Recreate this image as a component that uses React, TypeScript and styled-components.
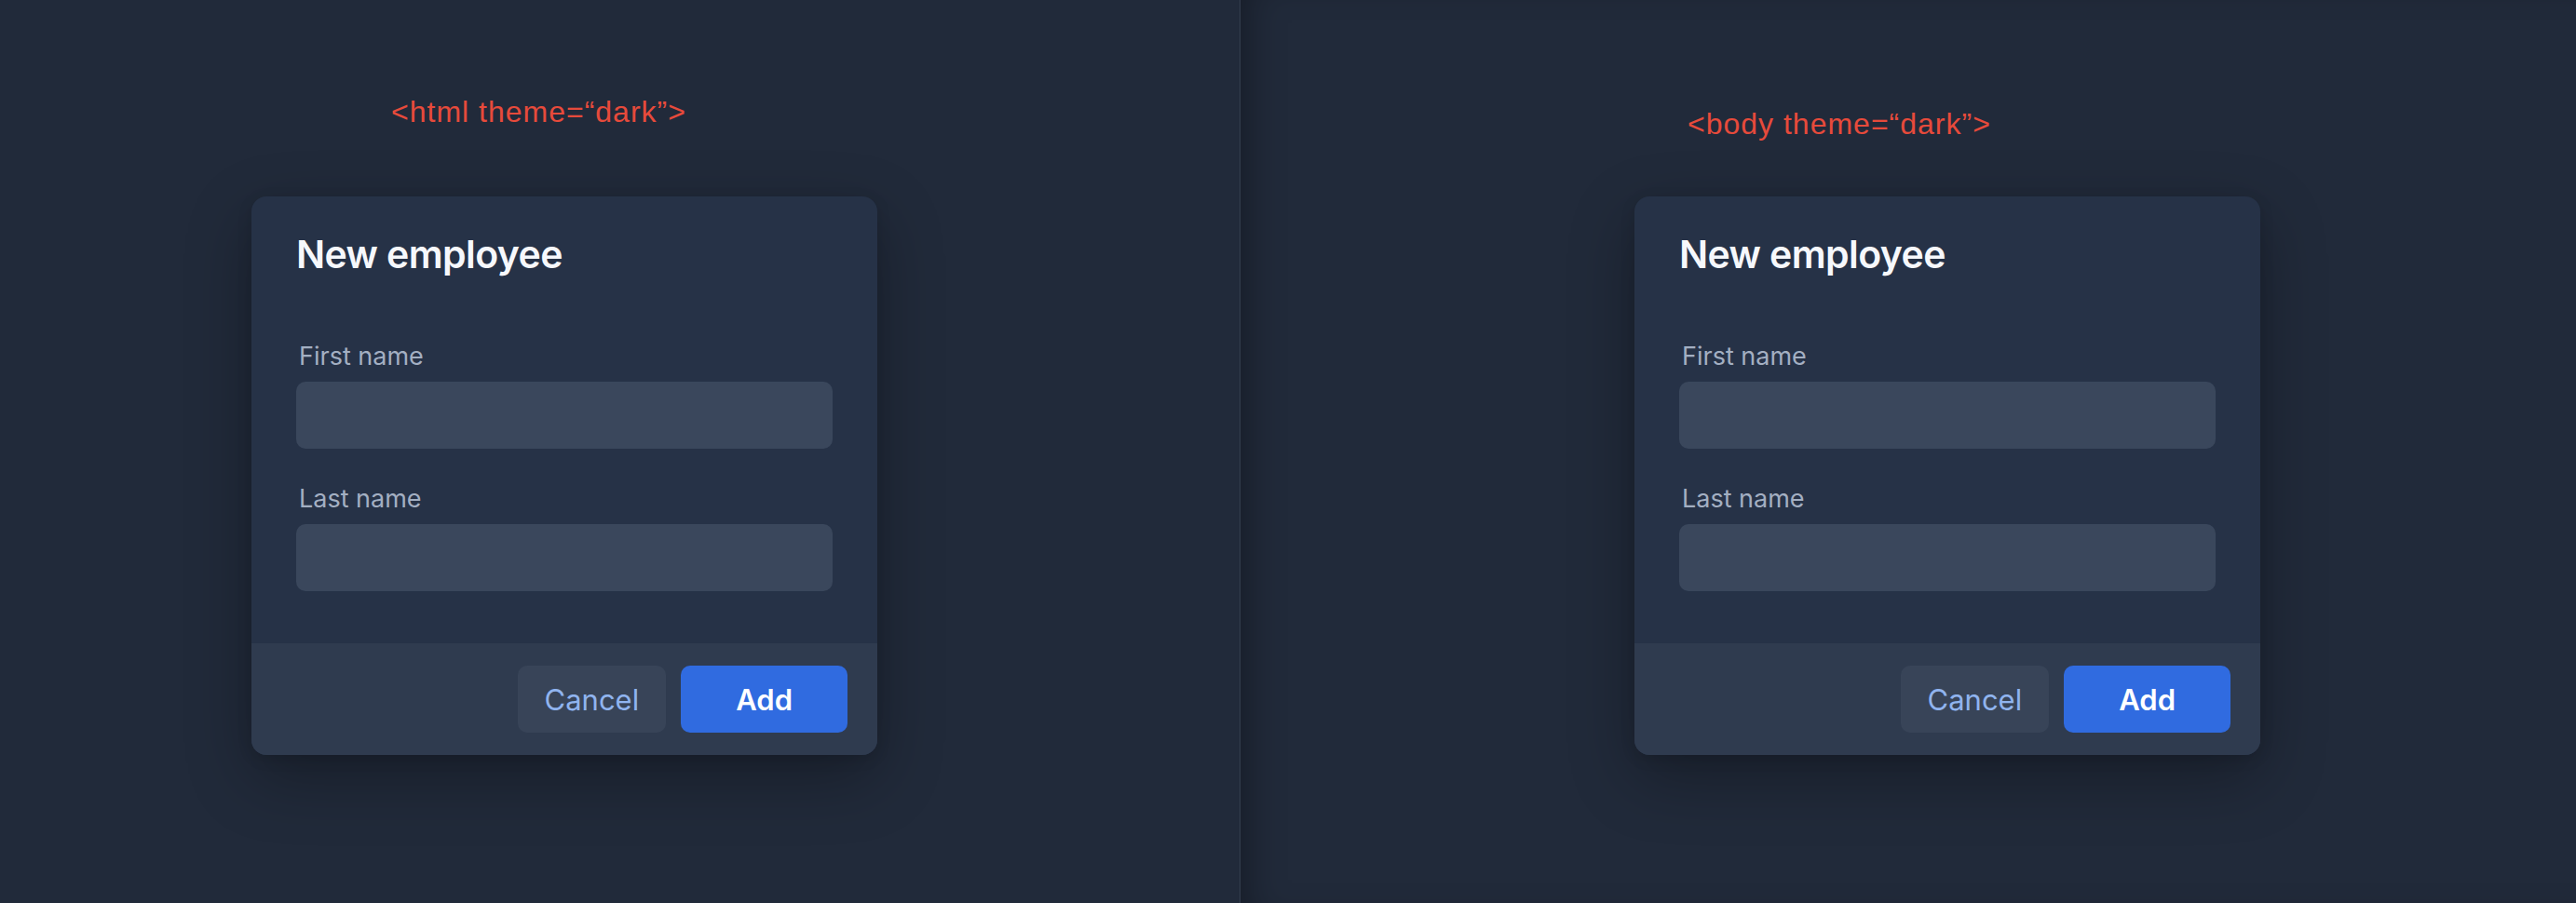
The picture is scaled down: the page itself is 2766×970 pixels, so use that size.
import React from 'react';
import styled, { createGlobalStyle } from 'styled-components';

const GlobalStyle = createGlobalStyle`
  html, body {
    margin: 0;
    padding: 0;
    background: #202938;
  }
  * {
    box-sizing: border-box;
  }
`;

const Page = styled.div`
  display: flex;
  width: 100%;
  height: 100vh;
  min-height: 970px;
  overflow: hidden;
`;

const Panel = styled.section<{ $width?: string; $top: number; $left: number; $shade?: boolean }>`
  display: flex;
  flex-direction: column;
  align-items: flex-start;
  width: ${(p) => p.$width || 'auto'};
  flex: ${(p) => (p.$width ? '0 0 auto' : '1 1 auto')};
  padding-top: ${(p) => p.$top}px;
  padding-left: ${(p) => p.$left}px;
  background: #212a3a;
  border-right: ${(p) => (p.$shade ? 'none' : '1px solid #343e4f')};
  box-shadow: ${(p) => (p.$shade ? 'inset 30px 0 40px -24px rgba(0, 0, 0, 0.35)' : 'none')};
`;

const ThemeTag = styled.div<{ $offset: number }>`
  margin-left: ${(p) => p.$offset}px;
  font-family: 'Liberation Sans', Arial, sans-serif;
  font-size: 32px;
  line-height: 36px;
  letter-spacing: 1px;
  color: #e74a3b;
  white-space: nowrap;
`;

const Dialog = styled.div<{ $gap: number }>`
  margin-top: ${(p) => p.$gap}px;
  width: 672px;
  border-radius: 16px;
  overflow: hidden;
  background: #263247;
  box-shadow: 0 24px 70px rgba(0, 0, 0, 0.3), 0 4px 16px rgba(0, 0, 0, 0.12);
  font-family: Inter, 'Noto Sans', sans-serif;
`;

const Body = styled.div`
  display: flex;
  flex-direction: column;
  padding: 37px 48px 56px;
`;

const Title = styled.h2`
  margin: 0 0 69px;
  font-size: 41px;
  line-height: 50px;
  font-weight: 600;
  letter-spacing: -0.6px;
  color: #f6f8fc;
`;

const Field = styled.label`
  display: flex;
  flex-direction: column;
  gap: 11px;
  & + & {
    margin-top: 38px;
  }
`;

const FieldLabel = styled.span`
  padding-left: 3px;
  font-size: 27px;
  line-height: 32px;
  font-weight: 400;
  color: #a3afc2;
`;

const Input = styled.input`
  height: 72px;
  width: 100%;
  border: none;
  outline: none;
  border-radius: 10px;
  background: #3a475c;
  padding: 0 20px;
  font-family: inherit;
  font-size: 27px;
  color: #f6f8fc;
`;

const Footer = styled.div`
  display: flex;
  justify-content: flex-end;
  gap: 16px;
  padding: 24px 32px;
  background: #2f3b4f;
`;

const Button = styled.button<{ $primary?: boolean }>`
  height: 72px;
  padding: 0 ${(p) => (p.$primary ? 59 : 29)}px;
  border: none;
  border-radius: 10px;
  background: ${(p) => (p.$primary ? '#306be0' : '#384458')};
  color: ${(p) => (p.$primary ? '#ffffff' : '#90b4ef')};
  font-family: inherit;
  font-size: 31px;
  font-weight: ${(p) => (p.$primary ? 600 : 400)};
  cursor: pointer;
`;

const EmployeeDialog = ({ gap }: { gap: number }) => (
  <Dialog $gap={gap}>
    <Body>
      <Title>New employee</Title>
      <Field>
        <FieldLabel>First name</FieldLabel>
        <Input type="text" />
      </Field>
      <Field>
        <FieldLabel>Last name</FieldLabel>
        <Input type="text" />
      </Field>
    </Body>
    <Footer>
      <Button>Cancel</Button>
      <Button $primary>Add</Button>
    </Footer>
  </Dialog>
);

const App = () => {
  return (
    <>
      <GlobalStyle />
      <Page>
        <Panel $width="1332px" $top={102} $left={270}>
          <ThemeTag $offset={150}>&lt;html theme=“dark”&gt;</ThemeTag>
          <EmployeeDialog gap={73} />
        </Panel>
        <Panel $top={115} $left={423} $shade>
          <ThemeTag $offset={57}>&lt;body theme=“dark”&gt;</ThemeTag>
          <EmployeeDialog gap={60} />
        </Panel>
      </Page>
    </>
  );
};

export default App;
